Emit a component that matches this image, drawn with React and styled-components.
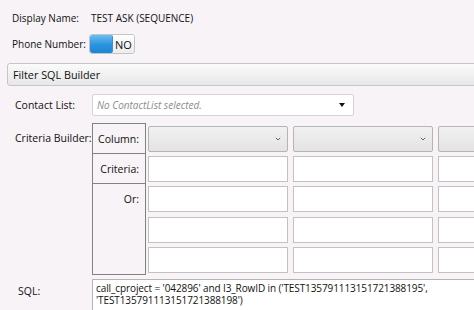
import React from 'react';
import styled, { createGlobalStyle } from 'styled-components';

const GlobalStyle = createGlobalStyle`
  html, body {
    margin: 0;
    padding: 0;
    background: #f7f3f6;
    overflow: hidden;
  }
  body {
    font-family: "Open Sans", "Noto Sans", sans-serif;
    font-size: 10px;
    color: #111;
  }
`;

const Page = styled.div`
  width: 474px;
  height: 310px;
  overflow: hidden;
  padding-top: 8px;
  box-sizing: border-box;
  white-space: nowrap;
`;

const InfoRow = styled.div`
  display: flex;
  align-items: center;
  padding-left: 12px;
  height: 20px;
  margin-bottom: ${p => p.mb || 0}px;
`;

const InfoLabel = styled.div`
  width: ${p => p.w}px;
  flex: none;
`;

const Toggle = styled.div`
  display: flex;
  width: 46px;
  height: 20px;
  border: 1px solid #c4c4c4;
  border-radius: 3px;
  overflow: hidden;
  box-sizing: border-box;
`;

const ToggleKnob = styled.div`
  width: 22px;
  background: linear-gradient(#6cbdf1, #2a93e0 55%, #1a86d6);
  border-right: 1px solid #3f8fcf;
  border-radius: 2px;
`;

const ToggleText = styled.div`
  flex: 1;
  display: flex;
  align-items: center;
  justify-content: center;
  background: linear-gradient(#ffffff, #ececec);
  font-size: 11px;
`;

const SectionBar = styled.div`
  margin-left: 7px;
  width: 500px;
  height: 23px;
  border: 1px solid #c6c6c6;
  border-radius: 3px;
  background: linear-gradient(#fbfbfb, #e7e7e7);
  display: flex;
  align-items: center;
  padding-left: 5px;
  box-sizing: border-box;
  font-size: 10.8px;
`;

const Form = styled.div`
  display: grid;
  grid-template-columns: 77px 1fr;
  padding-left: 15px;
  margin-top: 8px;
`;

const FieldLabel = styled.div`
  padding-top: ${p => p.pt || 0}px;
  padding-left: ${p => p.pl || 0}px;
  display: flex;
  align-items: ${p => (p.top ? 'flex-start' : 'center')};
  font-size: 10.5px;
`;

const Combo = styled.div`
  width: 262px;
  height: 22px;
  margin-bottom: 7px;
  background: #fff;
  border: 1px solid #d6d3d5;
  border-radius: 2px;
  box-sizing: border-box;
  display: flex;
  align-items: center;
  padding: 0 4px;
  justify-content: space-between;
`;

const Placeholder = styled.span`
  font-style: italic;
  color: #8c8c8c;
`;

const Caret = styled.span`
  width: 0;
  height: 0;
  border-left: 3.5px solid transparent;
  border-right: 3.5px solid transparent;
  border-top: 4px solid #111;
  margin-right: 4px;
`;

const Criteria = styled.div`
  display: grid;
  grid-template-columns: 51px repeat(3, 140px);
  grid-template-rows: 31px 30px 30px 31px 30px;
  column-gap: 5px;
  width: 600px;
  margin-bottom: 4px;
`;

const HeadCell = styled.div`
  grid-row: ${p => p.row};
  grid-column: 1;
  border: 1px solid #828282;
  border-top-width: ${p => (p.first ? 1 : 0)}px;
  margin-right: -3px;
  display: flex;
  justify-content: flex-end;
  align-items: ${p => (p.top ? 'flex-start' : 'center')};
  padding-right: 6px;
  padding-top: ${p => (p.top ? 8 : 0)}px;
  box-sizing: border-box;
  font-size: 10.5px;
`;

const Select = styled.div`
  grid-row: 1;
  height: 26px;
  align-self: center;
  border: 1px solid #b5b5b5;
  border-radius: 2px;
  background: linear-gradient(#f1f1f1, #e3e3e3);
  box-sizing: border-box;
  display: flex;
  justify-content: flex-end;
  align-items: center;
  padding-right: 6px;
`;

const TextCell = styled.div`
  height: 26px;
  align-self: center;
  border: 1px solid #c2c2c2;
  background: #fff;
  box-sizing: border-box;
`;

const SqlBox = styled.div`
  width: 460px;
  height: 40px;
  border: 1px solid #b4b4b4;
  background: #fff;
  padding: 2px 3px;
  box-sizing: border-box;
  line-height: 12px;
  letter-spacing: -0.1px;
  white-space: pre;
`;

const Chevron = () => (
  <svg width="6" height="4" viewBox="0 0 6 4">
    <path d="M0.8 0.8l2.2 2.2L5.2 0.8" fill="none" stroke="#666" strokeWidth="1" />
  </svg>
);

export default function App() {
  return (
    <Page>
      <GlobalStyle />
      <InfoRow mb={6}>
        <InfoLabel w={79}>Display Name:</InfoLabel>
        <span>TEST ASK (SEQUENCE)</span>
      </InfoRow>
      <InfoRow mb={9}>
        <InfoLabel w={77}>Phone Number:</InfoLabel>
        <Toggle>
          <ToggleKnob />
          <ToggleText>NO</ToggleText>
        </Toggle>
      </InfoRow>
      <SectionBar>Filter SQL Builder</SectionBar>
      <Form>
        <FieldLabel top pt={4}>Contact List:</FieldLabel>
        <Combo>
          <Placeholder>No ContactList selected.</Placeholder>
          <Caret />
        </Combo>
        <FieldLabel top pt={8}>Criteria Builder:</FieldLabel>
        <Criteria>
          <HeadCell row={1} first>Column:</HeadCell>
          <HeadCell row={2}>Criteria:</HeadCell>
          <HeadCell row="3 / 6" top>Or:</HeadCell>
          {[2, 3, 4].map(c => (
            <Select key={c} style={{ gridColumn: c }}>
              <Chevron />
            </Select>
          ))}
          {[2, 3, 4, 5].map(r =>
            [2, 3, 4].map(c => (
              <TextCell key={r + '-' + c} style={{ gridColumn: c, gridRow: r }} />
            ))
          )}
        </Criteria>
        <FieldLabel pl={3} top pt={5}>SQL:</FieldLabel>
        <SqlBox>
          {"call_cproject = '042896' and I3_RowID in ('TEST135791113151721388195',\n'TEST135791113151721388198')"}
        </SqlBox>
      </Form>
    </Page>
  );
}
